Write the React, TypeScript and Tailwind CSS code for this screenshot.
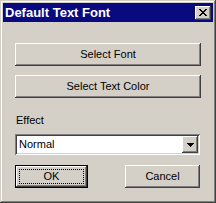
const raised =
  "shadow-[inset_-1px_-1px_#404040,inset_1px_1px_#ffffff,inset_-2px_-2px_#808080,inset_2px_2px_#d4d0c8]";

function CloseGlyph() {
  return (
    <svg width="8" height="7" viewBox="0 0 8 7" shapeRendering="crispEdges">
      <path
        d="M0 0h2v1H0zM6 0h2v1H6zM1 1h2v1H1zM5 1h2v1H5zM2 2h4v1H2zM3 3h2v1H3zM2 4h4v1H2zM1 5h2v1H1zM5 5h2v1H5zM0 6h2v1H0zM6 6h2v1H6z"
        fill="#000"
      />
    </svg>
  );
}

function ArrowGlyph() {
  return (
    <svg width="7" height="4" viewBox="0 0 7 4" shapeRendering="crispEdges">
      <path d="M0 0h7v1H0zM1 1h5v1H1zM2 2h3v1H2zM3 3h1v1H3z" fill="#000" />
    </svg>
  );
}

export default function App() {
  return (
    <div
      className="w-[216px] h-[203px] p-[3px] flex flex-col bg-[#d4d0c8] text-[11px] text-black shadow-[inset_-1px_-1px_#404040,inset_1px_1px_#d4d0c8,inset_-2px_-2px_#808080,inset_2px_2px_#ffffff]"
      style={{ fontFamily: '"Liberation Sans", Arial, sans-serif' }}
    >
      {/* title bar */}
      <div className="h-[19px] flex items-center justify-between pl-[2px] pr-[2px] bg-[#0a0a80]">
        <span className="text-white font-bold text-[13px] leading-none">Default Text Font</span>
        <button className={`w-[16px] h-[14px] flex items-center justify-center bg-[#d4d0c8] ${raised}`}>
          <CloseGlyph />
        </button>
      </div>

      <div className="flex flex-col px-[12px] pt-[21px]">
        <button className={`w-[186px] h-[23px] flex items-center justify-center bg-[#d4d0c8] ${raised}`}>
          Select Font
        </button>
        <button className={`mt-[9px] w-[186px] h-[23px] flex items-center justify-center bg-[#d4d0c8] ${raised}`}>
          Select Text Color
        </button>

        <div className="mt-[16px] h-[13px] leading-[13px] pl-[1px]">Effect</div>

        <div className="mt-[7px] w-[185px] h-[21px] flex items-center bg-white p-[2px] shadow-[inset_1px_1px_#808080,inset_-1px_-1px_#ffffff,inset_2px_2px_#404040,inset_-2px_-2px_#d4d0c8]">
          <span className="flex-1 pl-[2px]">Normal</span>
          <div className={`w-[16px] h-[17px] flex items-center justify-center bg-[#d4d0c8] ${raised}`}>
            <ArrowGlyph />
          </div>
        </div>

        <div className="mt-[10px] flex justify-between w-[185px]">
          <button className="w-[73px] h-[23px] border border-black bg-[#d4d0c8] p-0">
            <div className={`w-full h-full p-[3px] ${raised}`}>
              <div className="w-full h-full flex items-center justify-center border border-dotted border-black">
                OK
              </div>
            </div>
          </button>
          <button className={`w-[75px] h-[23px] flex items-center justify-center bg-[#d4d0c8] ${raised}`}>
            Cancel
          </button>
        </div>
      </div>
    </div>
  );
}
